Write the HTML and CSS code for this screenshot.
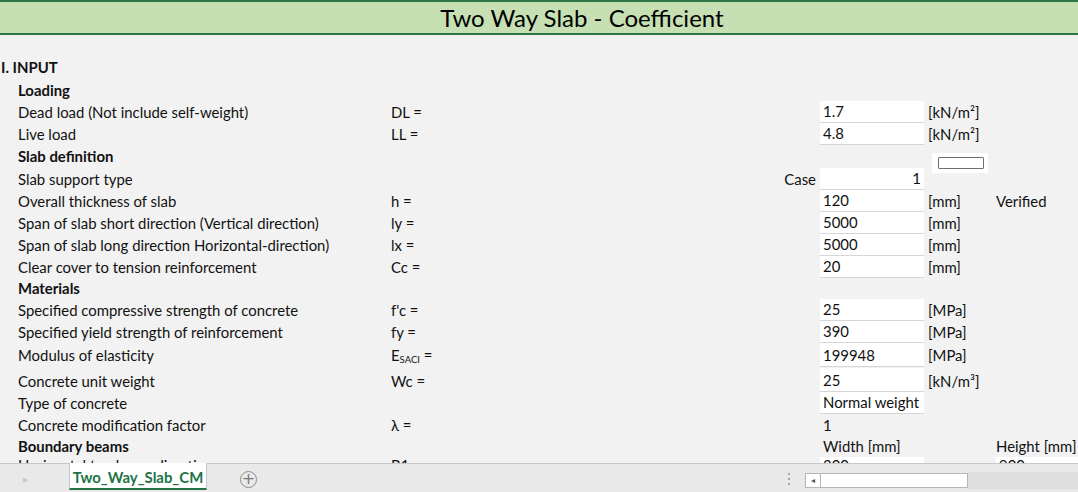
FILE: index.html
```html
<!DOCTYPE html>
<html>
<head>
<meta charset="utf-8">
<link rel="stylesheet" href="styles.css">
</head>
<body>
<div class="sheet">
  <div class="title">Two Way Slab - Coefficient</div>
  <div class="spacer"></div>

  <div class="row"><div class="sec">I. INPUT</div></div>
  <div class="row"><div></div><div class="b">Loading</div></div>
  <div class="row"><div></div><div>Dead load (Not include self-weight)</div><div>DL =</div><div class="v w">1.7</div><div class="u">[kN/m²]</div></div>
  <div class="row"><div></div><div>Live load</div><div>LL =</div><div class="v w">4.8</div><div class="u">[kN/m²]</div></div>
  <div class="row r23"><div></div><div class="b">Slab definition</div><div></div><div></div><div class="u"><span class="chk"><span class="chk-in"></span></span></div></div>
  <div class="row"><div></div><div>Slab support type</div><div class="case">Case</div><div class="v w right">1</div></div>
  <div class="row"><div></div><div>Overall thickness of slab</div><div>h =</div><div class="v w">120</div><div class="u">[mm]</div><div>Verified</div></div>
  <div class="row"><div></div><div>Span of slab short direction (Vertical direction)</div><div>ly =</div><div class="v w">5000</div><div class="u">[mm]</div></div>
  <div class="row"><div></div><div>Span of slab long direction Horizontal-direction)</div><div>lx =</div><div class="v w">5000</div><div class="u">[mm]</div></div>
  <div class="row"><div></div><div>Clear cover to tension reinforcement</div><div>Cc =</div><div class="v w">20</div><div class="u">[mm]</div></div>
  <div class="row r21"><div></div><div class="b">Materials</div></div>
  <div class="row"><div></div><div>Specified compressive strength of concrete</div><div>f'c =</div><div class="v w">25</div><div class="u">[MPa]</div></div>
  <div class="row"><div></div><div>Specified yield strength of reinforcement</div><div>fy =</div><div class="v w">390</div><div class="u">[MPa]</div></div>
  <div class="row r25"><div></div><div>Modulus of elasticity</div><div>E<sub>SACI</sub> =</div><div class="v w">199948</div><div class="u">[MPa]</div></div>
  <div class="row r24"><div></div><div>Concrete unit weight</div><div>Wc =</div><div class="v w">25</div><div class="u">[kN/m³]</div></div>
  <div class="row"><div></div><div>Type of concrete</div><div></div><div class="v w">Normal weight</div></div>
  <div class="row"><div></div><div>Concrete modification factor</div><div>λ =</div><div class="v">1</div></div>
  <div class="row r21"><div></div><div class="b">Boundary beams</div><div></div><div class="v">Width [mm]</div><div></div><div>Height [mm]</div></div>
  <div class="row last"><div></div><div>Horizontal top beam direction</div><div>B1 =</div><div class="v w">300</div><div></div><div class="w">900</div></div>
</div>
<div class="tabbar">
  <div class="nav">&#9656;</div>
  <div class="tab">Two_Way_Slab_CM</div>
  <div class="add">+</div>
  <div class="grow"></div>
  <div class="dots"></div>
  <div class="hscroll">
    <div class="harrow">&#9666;</div>
    <div class="hthumb"></div>
  </div>
  <div class="htrack"></div>
</div>
</body>
</html>
```

FILE: styles.css
```css
html, body {
  margin: 0;
  padding: 0;
  background: #f2f2f2;
}
body {
  width: 1078px;
  height: 492px;
  overflow: hidden;
  font-family: "Lato", "Liberation Sans", sans-serif;
  font-size: 14.9px;
  color: #111;
}
.sheet {
  height: 463px;
  overflow: hidden;
}
.title {
  height: 31px;
  border-top: 2px solid #2f7548;
  border-bottom: 2px solid #2f7548;
  background: #c6e0b4;
  text-align: center;
  font-size: 24px;
  line-height: 32px;
  color: #000;
  padding-left: 86px;
  box-sizing: content-box;
}
.spacer { height: 22px; }
.row {
  display: grid;
  grid-template-columns: 18px 373px 429px 104px 72px 82px;
  height: 22px;
  line-height: 22px;
  white-space: nowrap;
}
.row:first-of-type { line-height: 20px; }
.row.r23 { height: 23px; line-height: 23px; }
.row.r21 { height: 21px; line-height: 21px; }
.row.r25 { height: 25px; line-height: 25px; }
.row.r24 { height: 24px; line-height: 26px; }
.row.last { line-height: 17px; }
.sec {
  grid-column: 1 / 3;
  font-weight: bold;
  padding-left: 1px;
  line-height: 20px;
}
.b { font-weight: bold; }
.v { padding-left: 3px; }
.w {
  background: #fff;
  border-bottom: 1px solid #d6d6d6;
  height: 21px;
  line-height: 21px;
  padding-left: 3px;
}
.r25 .w, .r24 .w { height: 23px; line-height: 25px; }
.last .w { line-height: 17px; }
.right { text-align: right; padding-right: 3px; }
.u { padding-left: 4px; position: relative; }
.case { text-align: right; padding-right: 4px; }
sub {
  font-size: 9.5px;
  vertical-align: -2px;
  line-height: 0;
}
.chk {
  display: block;
  width: 56px;
  height: 20px;
  margin-left: 4px;
  margin-top: 8px;
  background: #fff;
  position: relative;
}
.chk-in {
  position: absolute;
  left: 6px;
  top: 4px;
  width: 44px;
  height: 10px;
  border: 1.5px solid #6f6f6f;
  border-radius: 1px;
}
.tabbar {
  height: 28px;
  border-top: 1px solid #c8c8c8;
  background: #e9e9e9;
  display: flex;
  align-items: stretch;
}
.nav {
  width: 69px;
  color: #c9c9c9;
  font-size: 11px;
  line-height: 30px;
  padding-left: 23px;
  box-sizing: border-box;
}
.tab {
  width: 138px;
  margin-top: -1px;
  height: 27px;
  background: #fff;
  border-left: 1px solid #c8c8c8;
  border-right: 1px solid #c8c8c8;
  border-bottom: 2px solid #217346;
  box-sizing: border-box;
  color: #217346;
  font-weight: bold;
  font-size: 14.9px;
  text-align: center;
  line-height: 28px;
}
.add {
  width: 15px;
  height: 15px;
  margin: 7px 0 0 33px;
  border: 1px solid #8a8a8a;
  border-radius: 50%;
  color: #7a7a7a;
  font-size: 16px;
  line-height: 14px;
  text-align: center;
  font-family: "DejaVu Sans", sans-serif;
}
.grow { flex: 1; }
.dots {
  width: 2px;
  margin: 9px 15px 0 0;
  height: 14px;
  background: repeating-linear-gradient(to bottom, #a8a8a8 0 2px, transparent 2px 5px);
}
.hscroll {
  margin-top: 9px;
  width: 163px;
  height: 15px;
  display: flex;
  border: 1px solid #b5b5b5;
  background: #fff;
  box-sizing: border-box;
}
.harrow {
  width: 14px;
  border-right: 1px solid #b5b5b5;
  background: #fff;
  color: #555;
  font-size: 8px;
  line-height: 13px;
  text-align: center;
}
.hthumb { flex: 1; background: #fff; }
.htrack {
  width: 110px;
  background: #dedede;
  margin-top: 8px;
  height: 17px;
}
```
